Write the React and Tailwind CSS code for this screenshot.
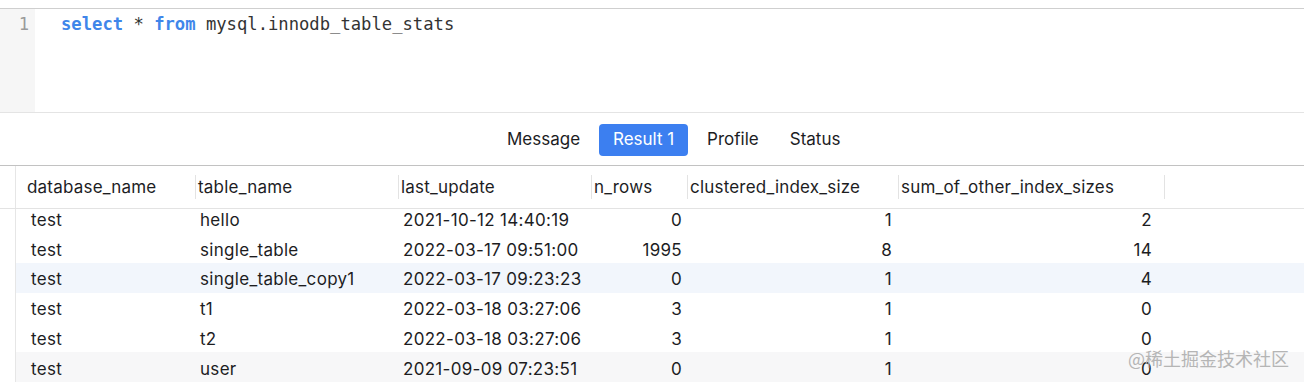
import React from 'react'

const columns = [
    { key: 'db', label: 'database_name', width: 'w-[179px]', cell: 'pl-[15px]' },
    { key: 'table', label: 'table_name', width: 'w-[203px]', cell: 'pl-[5px]' },
    { key: 'updated', label: 'last_update', width: 'w-[193px]', cell: 'pl-[5px]' },
    { key: 'rows', label: 'n_rows', width: 'w-[96px]', cell: 'text-right pr-[5px]' },
    { key: 'clustered', label: 'clustered_index_size', width: 'w-[211px]', cell: 'text-right pr-[6px]' },
    { key: 'other', label: 'sum_of_other_index_sizes', width: 'w-[266px]', cell: 'text-right pr-[12px]' },
]

const rows = [
    { db: 'test', table: 'hello', updated: '2021-10-12 14:40:19', rows: '0', clustered: '1', other: '2' },
    { db: 'test', table: 'single_table', updated: '2022-03-17 09:51:00', rows: '1995', clustered: '8', other: '14' },
    { db: 'test', table: 'single_table_copy1', updated: '2022-03-17 09:23:23', rows: '0', clustered: '1', other: '4' },
    { db: 'test', table: 't1', updated: '2022-03-18 03:27:06', rows: '3', clustered: '1', other: '0' },
    { db: 'test', table: 't2', updated: '2022-03-18 03:27:06', rows: '3', clustered: '1', other: '0' },
    { db: 'test', table: 'user', updated: '2021-09-09 07:23:51', rows: '0', clustered: '1', other: '0' },
]

const rowBg = ['bg-white', 'bg-white', 'bg-[#f2f6fc]', 'bg-white', 'bg-white', 'bg-[#f7f7f8]']

const App = () => {
    return (
        <div className="relative h-[382px] w-full overflow-hidden bg-white text-[#1d1d1f] font-['Inter','Liberation_Sans',sans-serif] flex flex-col">
            {/* Editor */}
            <div className="mt-[8px] h-[105px] flex border-t border-b border-t-[#cfcfcf] border-b-[#e4e4e4] font-['DejaVu_Sans_Mono',monospace] text-[17.2px]">
                <div className="w-[35px] bg-[#f6f6f6] pt-[3px] pr-[6px] text-right text-[#9a9a9a] leading-[24px]">1</div>
                <div className="pl-[26px] pt-[3px] leading-[24px] text-[#333]">
                    <span className="text-[#3f86ea] font-bold">select</span>
                    <span> * </span>
                    <span className="text-[#3f86ea] font-bold">from</span>
                    <span> mysql.innodb_table_stats</span>
                </div>
            </div>

            {/* Tabs */}
            <div className="h-[53px] flex items-center pl-[495px] pt-[2px] gap-[7px] border-b border-[#c2c2c2] text-[17px]">
                <button className="px-3 h-[32px]">Message</button>
                <button className="px-3 h-[32px] w-[89px] rounded-[4px] bg-[#3c7ff0] text-white">Result 1</button>
                <button className="px-3 h-[32px]">Profile</button>
                <button className="px-3 h-[32px]">Status</button>
            </div>

            {/* Table header */}
            <div className="h-[43px] flex border-b border-[#e3e3e3] text-[17px] tracking-[0.2px]">
                <div className="w-[16px] border-r border-[#e6e6e6]"></div>
                {columns.map((col, i) => (
                    <div key={col.key} className={`${col.width} flex items-center pt-[1px] ${i === 0 ? 'pl-[11px]' : 'pl-[2px] border-l border-[#e3e3e3] my-[9px]'}`}>
                        {col.label}
                    </div>
                ))}
                <div className="border-l border-[#e3e3e3] my-[9px]"></div>
            </div>

            {/* Table body */}
            <div className="flex-1 overflow-hidden flex text-[17px] tracking-[0.3px]">
                <div className="w-[16px] border-r border-[#e6e6e6]"></div>
                <div className="flex-1 -mt-[5px]">
                    {rows.map((row, r) => (
                        <div key={r} className={`h-[29.7px] pt-[4px] flex items-center ${rowBg[r]}`}>
                            {columns.map((col) => (
                                <div key={col.key} className={`${col.width} ${col.cell}`}>
                                    {row[col.key]}
                                </div>
                            ))}
                        </div>
                    ))}
                </div>
            </div>

            {/* Watermark */}
            <div className="absolute left-[1128px] top-[347px] text-[18px] text-[#b5b5b5] font-['Noto_Sans_CJK_SC',sans-serif] leading-[22px]">
                @稀土掘金技术社区
            </div>
        </div>
    )
}

export default App
